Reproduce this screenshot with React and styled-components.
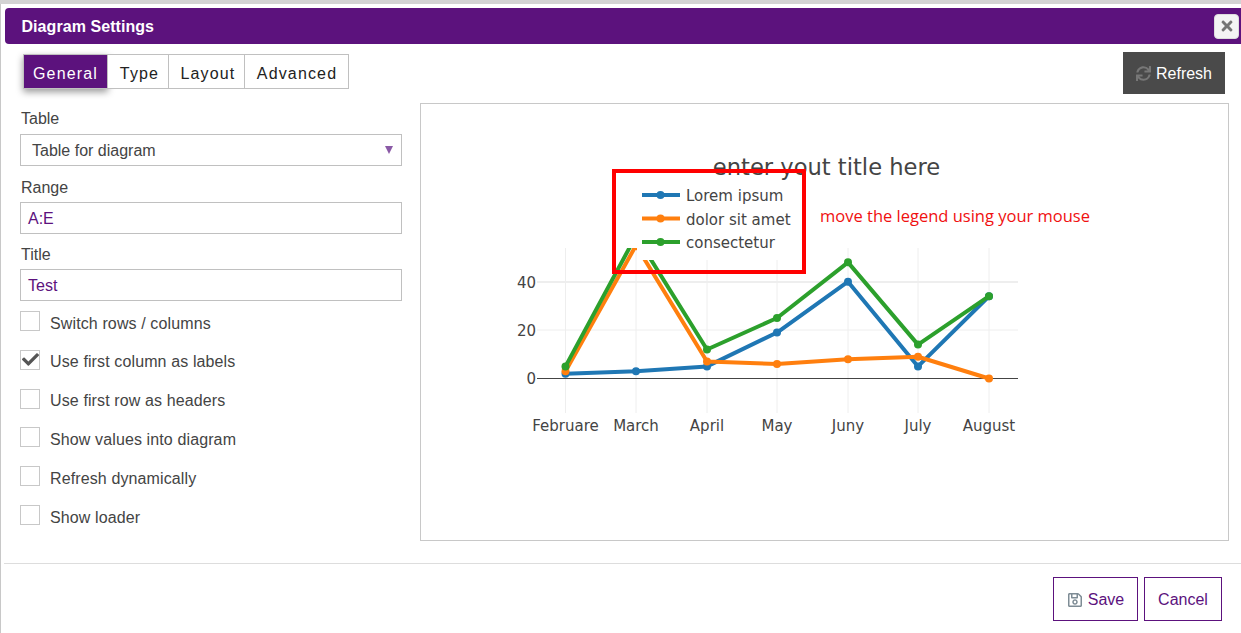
import React from "react";
import styled, { createGlobalStyle } from "styled-components";
import { FaTimes, FaSync, FaRegSave, FaCheck } from "react-icons/fa";

const Global = createGlobalStyle`
  html, body { margin: 0; padding: 0; background: #fff; }
  body { font-family: "Liberation Sans", Arial, sans-serif; font-size: 16px; color: #444; overflow: hidden; }
`;

const Page = styled.div`
  width: 1241px; height: 633px; overflow: hidden; box-sizing: border-box;
  border-top: 4px solid #d3d3d3;
`;
const Modal = styled.div`
  height: 629px; box-sizing: border-box; border-left: 1px solid #c8c8c8;
  padding-top: 4px; display: flex; flex-direction: column;
`;
const Header = styled.header`
  height: 36px; margin-left: 4px; flex: none; background: #5c127d; border-radius: 4px 0 0 4px;
  display: flex; align-items: center; justify-content: space-between; padding: 0 2px 0 16.5px;
`;
const HeaderTitle = styled.h1`
  margin: 0; padding-top: 2px; font-size: 16px; font-weight: 700; color: #fff; letter-spacing: 0.06px;
`;
const CloseButton = styled.button`
  width: 25px; height: 25px; padding: 0; border: 1px solid #ddd; border-radius: 4px; background: #f4f4f4;
  color: #757575; display: flex; align-items: center; justify-content: center; font-size: 16px;
`;
const Body = styled.main`
  flex: none; display: flex; flex-direction: column; padding: 10px 12px 0 19px;
`;
const TopRow = styled.div`
  display: flex; justify-content: space-between; align-items: flex-start; height: 49px; flex: none;
  padding-right: 4px;
`;
const Tabs = styled.nav`
  display: flex; margin-left: 3px;
`;
const Tab = styled.div`
  height: 35px; box-sizing: border-box; display: flex; align-items: center; justify-content: center;
  width: ${p => p.$w}px; letter-spacing: 1.15px; font-size: 16px; padding-top: 4px;
  padding-left: ${p => (p.$active ? 0 : 3)}px;
  padding-right: ${p => (p.$last ? 2 : 0)}px;
  border: 1px solid #c0c0c0; border-left-width: ${p => (p.$first ? 1 : 0)}px;
  background: ${p => (p.$active ? "#5c127d" : "#fff")};
  color: ${p => (p.$active ? "#fff" : "#222")};
  box-shadow: ${p => (p.$active ? "0 3px 7px rgba(0,0,0,.4)" : "none")};
`;
const RefreshButton = styled.button`
  width: 102px; height: 42px; margin-top: -2px; border: 0; background: #4a4a4a; color: #fff;
  font: 16px "Liberation Sans", Arial, sans-serif; display: flex; align-items: center; justify-content: center; gap: 5px; padding: 1px 0 0;
  svg { color: #777; font-size: 15px; }
`;
const Columns = styled.div`
  display: flex; gap: 18px; flex: none; height: 438px;
`;
const Form = styled.form`
  width: 382px; flex: none; display: flex; flex-direction: column; margin-top: 5px;
`;
const Label = styled.label`
  display: block; height: 21px; line-height: 21px; margin: 0 0 4px 1px; color: #444;
`;
const Field = styled.div`
  height: 32px; box-sizing: border-box; border: 1px solid #c0c0c0;
  margin-top: ${p => (p.$select ? 1 : 0)}px; margin-bottom: ${p => (p.$select ? 11 : 10)}px;
  display: flex; align-items: center; justify-content: space-between;
  padding: 2px ${p => (p.$select ? 8 : 7)}px 0 ${p => (p.$select ? 11 : 7)}px;
  color: ${p => (p.$select ? "#444" : "#5c127d")};
`;
const Caret = styled.span`
  width: 0; height: 0; margin-top: -2px; border-style: solid; border-width: 8px 4.5px 0; border-color: #8a5aa6 transparent transparent;
`;
const Checks = styled.div`
  display: flex; flex-direction: column; gap: 18.8px;
`;
const CheckRow = styled.div`
  display: flex; align-items: flex-start; gap: 10px; height: 20px; color: #444;
`;
const CheckText = styled.span`
  line-height: 20px; padding-top: 2.6px; letter-spacing: 0.12px;
`;
const CheckBox = styled.span`
  width: 20px; height: 20px; box-sizing: border-box; border: 1px solid #c8c8c8; flex: none;
  display: flex; align-items: center; justify-content: center; color: #555; font-size: 17px;
`;
const Preview = styled.section`
  position: relative; width: 809px; height: 438px; box-sizing: border-box; border: 1px solid #c8c8c8; flex: none;
`;
const Chart = styled.svg`
  display: block; width: 807px; height: 436px;
  font-family: "DejaVu Sans", Verdana, sans-serif;
`;
const LegendMark = styled.div`
  position: absolute; left: 191px; top: 65px; width: 194px; height: 105px; box-sizing: border-box;
  border: 4px solid #ff0000; pointer-events: none;
`;
const Hint = styled.span`
  position: absolute; left: 399px; top: 100px; color: #f01010; white-space: nowrap;
  font: 500 16.5px "Open Sans", sans-serif;
`;
const Footer = styled.footer`
  margin-left: 3px; margin-top: 22px; border-top: 1px solid #ddd; flex: none;
  display: flex; justify-content: flex-end; gap: 6px; padding: 13px 19px 0 0;
`;
const ActionButton = styled.button`
  height: 44px; width: ${p => p.$w}px; box-sizing: border-box; border: 1px solid #5c127d; background: #fff; color: #5c127d;
  font: 16px "Liberation Sans", Arial, sans-serif; display: flex; align-items: center; justify-content: center; gap: 5px; padding: 2px 0 0;
  svg { color: #7e8c95; font-size: 16px; }
`;

const xs = [565.5, 636, 707, 777, 848, 918, 989];
const toY = v => 378.5 - v * 2.42;
const series = [
  { color: "#1f77b4", y: [2, 3, 5, 19, 40, 5, 34].map(toY) },
  { color: "#ff7f0e", y: [3, 55, 7, 6, 8, 9, 0].map(toY) },
  { color: "#2ca02c", y: [5, 59, 12, 25, 48, 14, 34].map(toY) },
];
const months = ["Februare", "March", "April", "May", "Juny", "July", "August"];
const legend = [
  { name: "Lorem ipsum", y: 195 },
  { name: "dolor sit amet", y: 218.5 },
  { name: "consectetur", y: 242 },
];
const tabs = [
  { name: "General", w: 85, active: true },
  { name: "Type", w: 61 },
  { name: "Layout", w: 76 },
  { name: "Advanced", w: 104, last: true },
];
const checks = [
  { name: "Switch rows / columns" },
  { name: "Use first column as labels", on: true },
  { name: "Use first row as headers" },
  { name: "Show values into diagram" },
  { name: "Refresh dynamically" },
  { name: "Show loader" },
];

function ChartDrawing() {
  return (
    <Chart viewBox="421 104 807 436">
      <defs>
        <clipPath id="plot"><rect x="537" y="248" width="481" height="165" /></clipPath>
      </defs>
      {xs.map(x => <line key={x} x1={x} x2={x} y1="248" y2="413" stroke="#eee" />)}
      {[282, 330].map(y => <line key={y} x1="537" x2="1018" y1={y} y2={y} stroke="#eee" strokeWidth={y === 282 ? 2 : 1} />)}
      <line x1="537" x2="1018" y1="378.5" y2="378.5" stroke="#444" />
      <g clipPath="url(#plot)">
        {series.map(s => (
          <g key={s.color} fill={s.color}>
            <polyline points={xs.map((x, i) => `${x},${s.y[i]}`).join(" ")} fill="none" stroke={s.color} strokeWidth="4" strokeLinejoin="round" />
            {xs.map((x, i) => <circle key={x} cx={x} cy={s.y[i]} r="4" />)}
          </g>
        ))}
      </g>
      <g fill="#444" fontSize="15">
        {[[40, 288], [20, 336], [0, 384]].map(([t, y]) => <text key={t} x="536" y={y} textAnchor="end">{t}</text>)}
        {months.map((m, i) => <text key={m} x={xs[i]} y="431" textAnchor="middle">{m}</text>)}
      </g>
      <text x="826.5" y="175" textAnchor="middle" fontSize="22.6" fill="#444">enter yout title here</text>
      <rect x="637" y="184" width="165" height="76" fill="#fff" />
      {legend.map((l, i) => (
        <g key={l.name}>
          <line x1="642" x2="680" y1={l.y} y2={l.y} stroke={series[i].color} strokeWidth="4" />
          <circle cx="660.5" cy={l.y} r="4" fill={series[i].color} />
          <text x="686" y={l.y + 6} fontSize="15" fill="#444">{l.name}</text>
        </g>
      ))}
    </Chart>
  );
}

export default function App() {
  return (
    <Page>
      <Global />
      <Modal>
        <Header>
          <HeaderTitle>Diagram Settings</HeaderTitle>
          <CloseButton aria-label="Close"><FaTimes /></CloseButton>
        </Header>
        <Body>
          <TopRow>
            <Tabs>
              {tabs.map((t, i) => <Tab key={t.name} $w={t.w} $first={i === 0} $active={t.active} $last={t.last}>{t.name}</Tab>)}
            </Tabs>
            <RefreshButton><FaSync />Refresh</RefreshButton>
          </TopRow>
          <Columns>
            <Form>
              <Label>Table</Label>
              <Field $select>Table for diagram<Caret /></Field>
              <Label>Range</Label>
              <Field>A:E</Field>
              <Label>Title</Label>
              <Field>Test</Field>
              <Checks>
                {checks.map(c => (
                  <CheckRow key={c.name}>
                    <CheckBox>{c.on && <FaCheck />}</CheckBox>
                    <CheckText>{c.name}</CheckText>
                  </CheckRow>
                ))}
              </Checks>
            </Form>
            <Preview>
              <ChartDrawing />
              <LegendMark />
              <Hint>move the legend using your mouse</Hint>
            </Preview>
          </Columns>
        </Body>
        <Footer>
          <ActionButton $w={85}><FaRegSave />Save</ActionButton>
          <ActionButton $w={78}>Cancel</ActionButton>
        </Footer>
      </Modal>
    </Page>
  );
}
